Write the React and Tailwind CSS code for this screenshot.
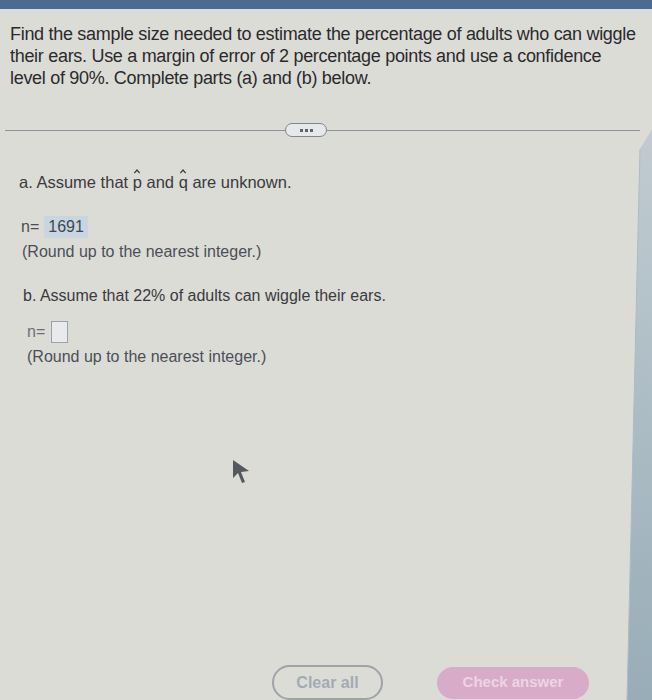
import React from 'react';

// Letter with a circumflex hat (p-hat, q-hat)
function Hat({ children }) {
  return (
    <span className="relative inline-block">
      <svg className="absolute left-1/2 -translate-x-1/2 -top-[2px]" width="7" height="5" viewBox="0 0 7 5">
        <path d="M0.8 4.2 L3.5 1 L6.2 4.2" fill="none" stroke="#3a3a3d" strokeWidth="1.2" />
      </svg>
      {children}
    </span>
  );
}

export default function App() {
  return (
    <div
      className="relative w-[652px] h-[700px] overflow-hidden flex flex-col bg-[#dcdcd7] text-[#3a3a3c]"
      style={{ fontFamily: '"Liberation Sans", Arial, sans-serif' }}
    >
      {/* top window bar */}
      <div className="h-[9px] bg-[#4d6a93] shrink-0" />

      <div className="flex-1 flex flex-col pr-[12px]">
        {/* question text */}
        <div className="pl-[10px] pt-[14px] text-[18px] leading-[22px] tracking-[-0.3px] text-[#2a2a2c]">
          Find the sample size needed to estimate the percentage of adults who can wiggle
          their ears. Use a margin of error of 2 percentage points and use a confidence
          level of 90%. Complete parts (a) and (b) below.
        </div>

        {/* divider with pill */}
        <div className="flex items-center mt-[34px] pl-[5px]">
          <div className="w-[280px] h-px bg-[#8e949c]" />
          <div className="w-[42px] h-[14px] rounded-full border border-[#7d8691] bg-[#e6e8ea] flex items-center justify-center gap-[2px]">
            <span className="w-[3px] h-[3px] bg-[#5b6470]" />
            <span className="w-[3px] h-[3px] bg-[#5b6470]" />
            <span className="w-[3px] h-[3px] bg-[#5b6470]" />
          </div>
          <div className="flex-1 h-px bg-[#8e949c]" />
        </div>

        {/* part a */}
        <div className="pl-[19px] mt-[34px] text-[16.5px] leading-[22px] text-[#3a3a3d]">
          a. Assume that <Hat>p</Hat> and <Hat>q</Hat> are unknown.
        </div>

        <div className="pl-[21px] mt-[22px] flex items-center text-[16px] text-[#4a4d52]">
          <span>n=</span>
          <span className="ml-[5px] px-[4px] h-[22px] flex items-center bg-[#c9d6df] text-[#3f4650]">1691</span>
        </div>
        <div className="pl-[22px] mt-[2px] text-[16px] leading-[22px] text-[#4a4f57]">
          (Round up to the nearest integer.)
        </div>

        {/* part b */}
        <div className="pl-[23px] mt-[22px] text-[16px] leading-[22px] text-[#3a3a3d]">
          b. Assume that 22% of adults can wiggle their ears.
        </div>

        <div className="pl-[27px] mt-[13px] flex items-center text-[16px] text-[#6b7078]">
          <span>n=</span>
          <span className="ml-[6px] w-[17px] h-[22px] border border-[#9aa3ad] bg-[#e8eaeb]" />
        </div>
        <div className="pl-[27px] mt-[2px] text-[16px] leading-[22px] text-[#4a4f57]">
          (Round up to the nearest integer.)
        </div>

        {/* mouse cursor */}
        <div className="pl-[231px] mt-[90px]">
          <svg width="22" height="28" viewBox="0 0 22 28">
            <path d="M2 2 L2 20 L7 15 L11 25 L14 24 L10 14 L18 13 Z" fill="#55595e" />
          </svg>
        </div>

        <div className="flex-1" />

        {/* buttons */}
        <div className="flex items-center">
          <div className="ml-[272px] w-[111px] h-[35px] rounded-full border-2 border-[#9ea3a8] flex items-center justify-center text-[16px] font-bold text-[#a3aab3]">
            Clear all
          </div>
          <div className="ml-[54px] w-[152px] h-[32px] rounded-full bg-[#d8abc8] flex items-center justify-center text-[15px] font-bold text-[#ecd5e2]">
            Check answer
          </div>
        </div>
      </div>

      {/* photo edge: monitor bezel lying over the page's right side */}
      <svg className="absolute right-0 top-[9px] pointer-events-none" width="40" height="691" viewBox="0 0 40 691">
        <defs>
          <linearGradient id="bezel" x1="0" y1="0" x2="0" y2="1">
            <stop offset="0" stopColor="#c9d2d6" />
            <stop offset="1" stopColor="#98adb8" />
          </linearGradient>
        </defs>
        <polygon points="40,0 40,691 15,691 28,140 40,120" fill="url(#bezel)" />
        <line x1="28" y1="140" x2="15" y2="691" stroke="#aebbc2" strokeWidth="1" />
      </svg>
    </div>
  );
}
